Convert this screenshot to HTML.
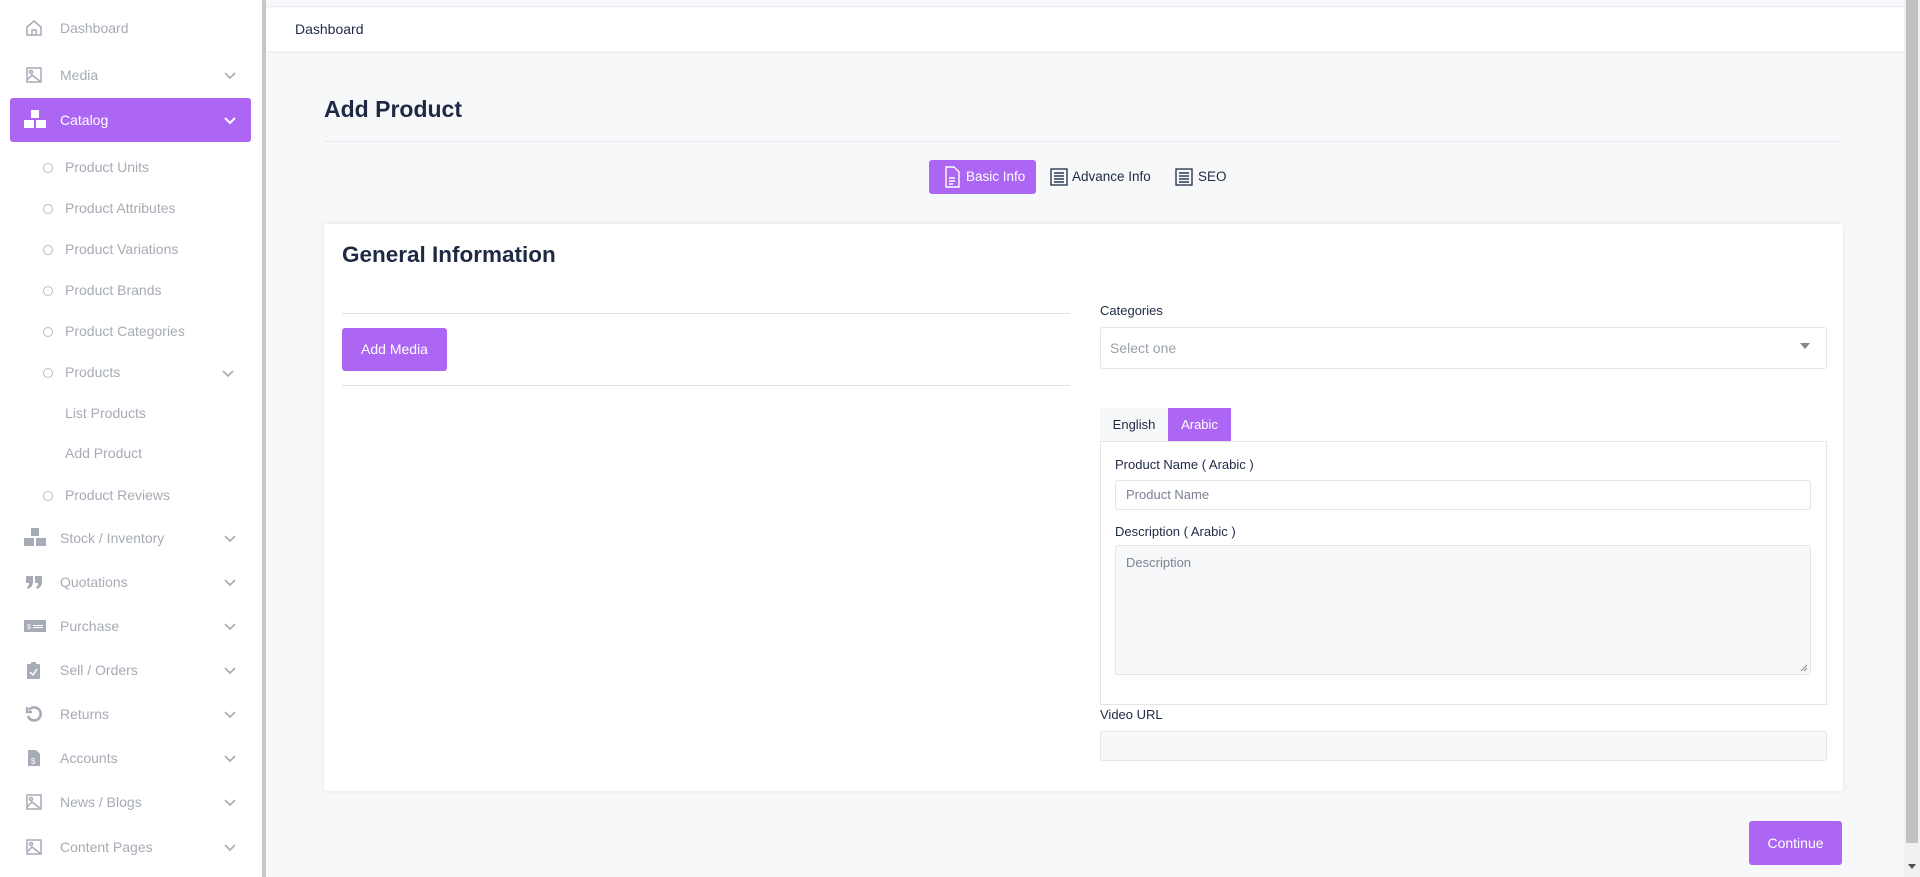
<!DOCTYPE html>
<html><head><meta charset="utf-8"><style>
*{box-sizing:border-box;margin:0;padding:0}
body{width:1920px;height:877px;overflow:hidden;background:#f7f8fa;font-family:"Liberation Sans",sans-serif;position:relative}
.a{position:absolute}
#sb{left:0;top:0;width:262px;height:877px;background:#fff}
#sbl{left:262px;top:0;width:4px;height:877px;background:#c8c8c8}
.it{position:absolute;left:0;width:262px;height:24px;font-size:14px;color:#a6abb5;line-height:24px}
.it .t{position:absolute;left:60px}
.it .ic{position:absolute;left:25px;top:3px;width:18px;height:18px}
.it .ch{position:absolute;left:224px;top:6px;width:12px;height:12px}
.sub{position:absolute;left:65px;font-size:14px;color:#a6abb5;line-height:20px}
.circ{position:absolute;left:43px;width:10px;height:10px;border:1px solid #b8bcc4;border-radius:50%}
.lbl{position:absolute;font-size:13px;color:#1e2a44}
.inp{position:absolute;border:1px solid #e3e5e9;border-radius:3px;background:#fff;font-size:13px;color:#7a8290}
</style></head><body>
<div id="sb" class="a"></div>
<div id="sbl" class="a"></div>

<div class="it" style="top:16px"><svg class="ic" viewBox="0 0 18 18" fill="none" stroke="#a6abb5" stroke-width="1.5"><path d="M2 8 L9 2 L16 8 V16 H2 Z"/><path d="M7 16 V11 H11 V16"/></svg><span class="t">Dashboard</span></div>
<div class="it" style="top:63px"><svg class="ic" viewBox="0 0 18 18" fill="none" stroke="#a6abb5" stroke-width="1.5"><rect x="2" y="2" width="14" height="14"/><circle cx="6" cy="6" r="1.5"/><path d="M2 14 L7 9 L16 16"/></svg><span class="t">Media</span><svg class="ch" viewBox="0 0 12 12" fill="none" stroke="#a6abb5" stroke-width="1.6"><path d="M1 4 L6 9 L11 4"/></svg></div>
<div class="a" style="left:10px;top:98px;width:241px;height:44px;background:#ac66f3;border-radius:3px"></div>
<div class="it" style="top:108px;color:#fff"><svg class="ic" style="width:22px;height:20px;left:24px;top:1px" viewBox="0 0 22 20" fill="#fff"><rect x="7" y="1" width="8" height="8"/><rect x="0" y="11" width="10" height="8"/><rect x="12" y="11" width="10" height="8"/></svg><span class="t">Catalog</span><svg class="ch" viewBox="0 0 12 12" fill="none" stroke="#fff" stroke-width="2"><path d="M1 4 L6 9 L11 4"/></svg></div>

<div class="circ" style="top:163px"></div><div class="sub" style="top:157px">Product Units</div>
<div class="circ" style="top:204px"></div><div class="sub" style="top:198px">Product Attributes</div>
<div class="circ" style="top:245px"></div><div class="sub" style="top:239px">Product Variations</div>
<div class="circ" style="top:286px"></div><div class="sub" style="top:280px">Product Brands</div>
<div class="circ" style="top:327px"></div><div class="sub" style="top:321px">Product Categories</div>
<div class="circ" style="top:368px"></div><div class="sub" style="top:362px">Products</div>
<svg class="a" style="left:222px;top:367px;width:12px;height:12px" viewBox="0 0 12 12" fill="none" stroke="#a6abb5" stroke-width="1.6"><path d="M1 4 L6 9 L11 4"/></svg>
<div class="sub" style="top:403px">List Products</div>
<div class="sub" style="top:443px">Add Product</div>
<div class="circ" style="top:491px"></div><div class="sub" style="top:485px">Product Reviews</div>

<div class="it" style="top:526px"><svg class="ic" style="width:22px;height:20px;left:24px;top:1px" viewBox="0 0 22 20" fill="#a6abb5"><rect x="7" y="1" width="8" height="8"/><rect x="0" y="11" width="10" height="8"/><rect x="12" y="11" width="10" height="8"/></svg><span class="t">Stock / Inventory</span><svg class="ch" viewBox="0 0 12 12" fill="none" stroke="#a6abb5" stroke-width="1.6"><path d="M1 4 L6 9 L11 4"/></svg></div>
<div class="it" style="top:570px"><svg class="ic" viewBox="0 0 18 18" fill="#a6abb5"><path d="M1 3 H8 V9 Q8 14 3 16 L2 14 Q4 13 4 10 H1 Z"/><path d="M10 3 H17 V9 Q17 14 12 16 L11 14 Q13 13 13 10 H10 Z"/></svg><span class="t">Quotations</span><svg class="ch" viewBox="0 0 12 12" fill="none" stroke="#a6abb5" stroke-width="1.6"><path d="M1 4 L6 9 L11 4"/></svg></div>
<div class="it" style="top:614px"><svg class="ic" style="width:22px;left:24px" viewBox="0 0 22 18" fill="#a6abb5"><rect x="0" y="3" width="22" height="12"/><text x="3" y="12" font-size="7" fill="#fff" font-family="Liberation Sans">$</text><rect x="9" y="8" width="10" height="1" fill="#fff"/><rect x="9" y="10" width="10" height="1" fill="#fff"/></svg><span class="t">Purchase</span><svg class="ch" viewBox="0 0 12 12" fill="none" stroke="#a6abb5" stroke-width="1.6"><path d="M1 4 L6 9 L11 4"/></svg></div>
<div class="it" style="top:658px"><svg class="ic" viewBox="0 0 18 18" fill="#a6abb5"><rect x="2" y="3" width="13" height="15" rx="1"/><rect x="6" y="1" width="5" height="3"/><path d="M5 11 L8 14 L12 8" stroke="#fff" stroke-width="1.5" fill="none"/></svg><span class="t">Sell / Orders</span><svg class="ch" viewBox="0 0 12 12" fill="none" stroke="#a6abb5" stroke-width="1.6"><path d="M1 4 L6 9 L11 4"/></svg></div>
<div class="it" style="top:702px"><svg class="ic" viewBox="0 0 18 18" fill="none" stroke="#a6abb5" stroke-width="2.6"><path d="M4 5 A6.5 6.5 0 1 1 3 11"/><path d="M2 2 V7 H7" stroke-width="2.2"/></svg><span class="t">Returns</span><svg class="ch" viewBox="0 0 12 12" fill="none" stroke="#a6abb5" stroke-width="1.6"><path d="M1 4 L6 9 L11 4"/></svg></div>
<div class="it" style="top:746px"><svg class="ic" viewBox="0 0 18 18" fill="#a6abb5"><path d="M3 1 H11 L15 5 V17 H3 Z"/><text x="6" y="15" font-size="8" fill="#fff" font-family="Liberation Sans">$</text></svg><span class="t">Accounts</span><svg class="ch" viewBox="0 0 12 12" fill="none" stroke="#a6abb5" stroke-width="1.6"><path d="M1 4 L6 9 L11 4"/></svg></div>
<div class="it" style="top:790px"><svg class="ic" viewBox="0 0 18 18" fill="none" stroke="#a6abb5" stroke-width="1.5"><rect x="2" y="2" width="14" height="14"/><circle cx="6" cy="6" r="1.5"/><path d="M2 14 L7 9 L16 16"/></svg><span class="t">News / Blogs</span><svg class="ch" viewBox="0 0 12 12" fill="none" stroke="#a6abb5" stroke-width="1.6"><path d="M1 4 L6 9 L11 4"/></svg></div>
<div class="it" style="top:835px"><svg class="ic" viewBox="0 0 18 18" fill="none" stroke="#a6abb5" stroke-width="1.5"><rect x="2" y="2" width="14" height="14"/><circle cx="6" cy="6" r="1.5"/><path d="M2 14 L7 9 L16 16"/></svg><span class="t">Content Pages</span><svg class="ch" viewBox="0 0 12 12" fill="none" stroke="#a6abb5" stroke-width="1.6"><path d="M1 4 L6 9 L11 4"/></svg></div>

<div class="a" style="left:266px;top:0;width:1638px;height:7px;background:#f7f8fa;border-bottom:1px solid #eceef1"></div>
<div class="a" style="left:266px;top:8px;width:1638px;height:43px;background:#fff;box-shadow:0 2px 4px rgba(0,0,0,.04)"></div>
<div class="a" style="left:295px;top:21px;font-size:14px;color:#1e2a44">Dashboard</div>
<div class="a" style="left:1904px;top:0;width:16px;height:877px;background:#f1f1f1"></div>
<div class="a" style="left:1906px;top:0;width:12px;height:843px;background:#c1c1c1"></div>
<svg class="a" style="left:1908px;top:864px;width:8px;height:6px" viewBox="0 0 8 6"><path d="M0 0 H8 L4 5 Z" fill="#505050"/></svg>

<div class="a" style="left:324px;top:96px;font-size:23px;font-weight:bold;color:#1e2a44">Add Product</div>
<div class="a" style="left:324px;top:141px;width:1518px;height:1px;background:#e6e8eb"></div>

<div class="a" style="left:929px;top:160px;width:107px;height:34px;background:#ac66f3;border-radius:3px"></div>
<svg class="a" style="left:944px;top:166px;width:16px;height:22px" viewBox="0 0 16 22" fill="none" stroke="#fff" stroke-width="1.4"><path d="M2 1 H10 L15 6 V21 H2 Z"/><path d="M5 12 H11 M5 15 H11 M5 18 H9"/></svg>
<div class="a" style="left:966px;top:169px;font-size:13.5px;color:#fff">Basic Info</div>
<svg class="a" style="left:1050px;top:168px;width:18px;height:18px" viewBox="0 0 18 18" fill="none" stroke="#2d3a55" stroke-width="1.4"><rect x="1" y="1" width="16" height="16"/><path d="M4 5 H14 M4 8 H14 M4 11 H14 M4 14 H14"/></svg>
<div class="a" style="left:1072px;top:169px;font-size:13.5px;color:#1e2a44">Advance Info</div>
<svg class="a" style="left:1175px;top:168px;width:18px;height:18px" viewBox="0 0 18 18" fill="none" stroke="#2d3a55" stroke-width="1.4"><rect x="1" y="1" width="16" height="16"/><path d="M4 5 H14 M4 8 H14 M4 11 H14 M4 14 H14"/></svg>
<div class="a" style="left:1198px;top:169px;font-size:13.5px;color:#1e2a44">SEO</div>

<div class="a" style="left:324px;top:224px;width:1519px;height:567px;background:#fff;border-radius:3px;box-shadow:0 0 6px rgba(0,0,0,.08)"></div>
<div class="a" style="left:342px;top:242px;font-size:22.5px;font-weight:bold;color:#1e2a44">General Information</div>
<div class="a" style="left:342px;top:313px;width:728px;height:1px;background:#e1e3e7"></div>
<div class="a" style="left:342px;top:328px;width:105px;height:43px;background:#ac66f3;border-radius:3px;color:#fff;font-size:14px;line-height:43px;text-align:center">Add Media</div>
<div class="a" style="left:342px;top:385px;width:728px;height:1px;background:#e1e3e7"></div>

<div class="lbl" style="left:1100px;top:303px">Categories</div>
<div class="inp" style="left:1100px;top:327px;width:727px;height:42px;line-height:40px;padding-left:9px;color:#9aa0aa;font-size:14px">Select one</div>
<svg class="a" style="left:1800px;top:343px;width:10px;height:6px" viewBox="0 0 10 6"><path d="M0 0 H10 L5 6 Z" fill="#888"/></svg>

<div class="a" style="left:1100px;top:408px;width:68px;height:33px;background:#f7f8fa;font-size:13px;color:#1e2a44;line-height:33px;text-align:center">English</div>
<div class="a" style="left:1168px;top:408px;width:63px;height:33px;background:#ac66f3;font-size:13px;color:#fff;line-height:33px;text-align:center">Arabic</div>
<div class="a" style="left:1100px;top:441px;width:727px;height:264px;border:1px solid #e3e5e9"></div>
<div class="lbl" style="left:1115px;top:457px">Product Name ( Arabic )</div>
<div class="inp" style="left:1115px;top:480px;width:696px;height:30px;line-height:28px;padding-left:10px">Product Name</div>
<div class="lbl" style="left:1115px;top:524px">Description ( Arabic )</div>
<div class="inp" style="left:1115px;top:545px;width:696px;height:130px;background:#f7f8fa;padding:9px 10px">Description</div>
<svg class="a" style="left:1800px;top:664px;width:8px;height:8px" viewBox="0 0 8 8" stroke="#888"><path d="M7 1 L1 7 M7 4 L4 7"/></svg>

<div class="lbl" style="left:1100px;top:707px">Video URL</div>
<div class="inp" style="left:1100px;top:731px;width:727px;height:30px;background:#f7f8fa"></div>

<div class="a" style="left:1749px;top:821px;width:93px;height:44px;background:#ac66f3;border-radius:3px;color:#fff;font-size:14px;line-height:44px;text-align:center">Continue</div>
</body></html>
